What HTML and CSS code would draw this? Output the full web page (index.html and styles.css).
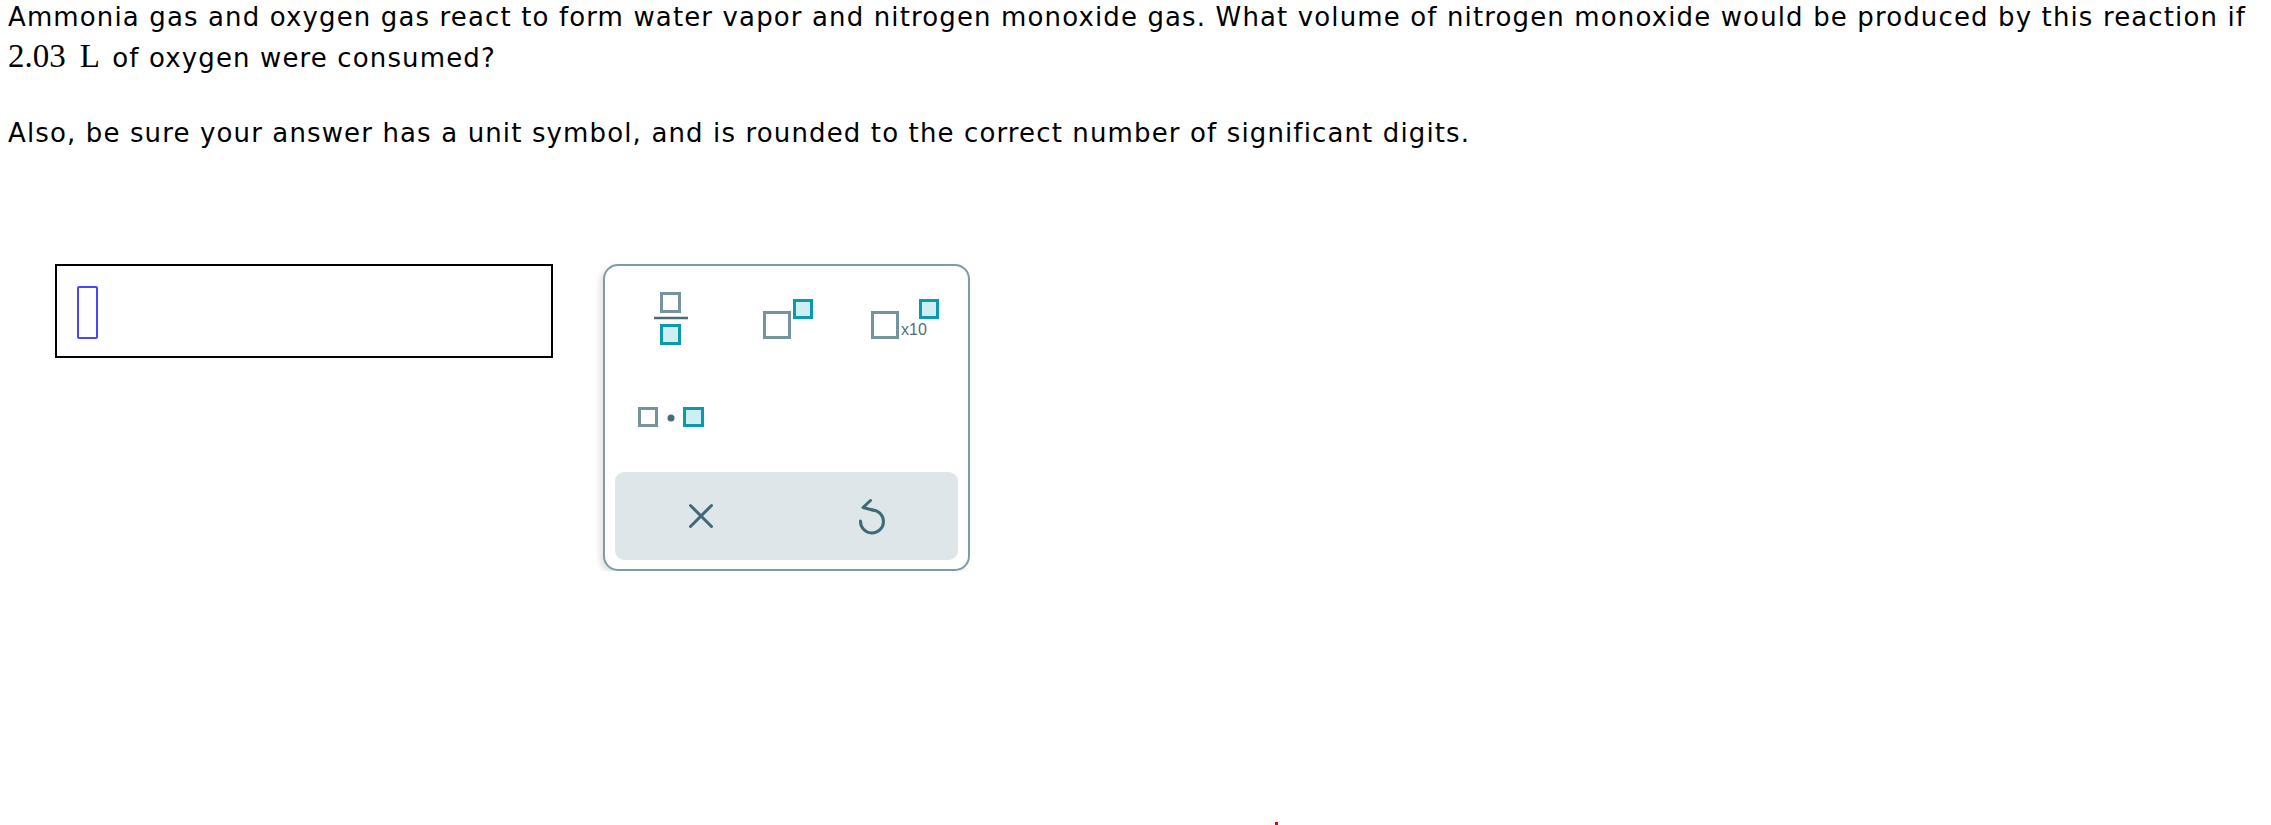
FILE: index.html
```html
<!DOCTYPE html>
<html lang="en">
<head>
<meta charset="utf-8">
<title>Question</title>
<link rel="stylesheet" href="styles.css">
</head>
<body>
<div class="page">
  <p class="question intro">Ammonia gas and oxygen gas react to form water vapor and nitrogen monoxide gas. What volume of nitrogen monoxide would be produced by this reaction if <span class="math"><span class="num">2.03</span><span class="unit">L</span></span> of oxygen were consumed?</p>
  <p class="question note">Also, be sure your answer has a unit symbol, and is rounded to the correct number of significant digits.</p>

  <div class="answer-row">
    <div class="answer-box"><span class="cursor-slot"></span></div>

    <div class="palette">
      <div class="palette-grid">
        <button class="tool" type="button" aria-label="fraction">
          <svg width="36" height="56" viewBox="0 0 36 56">
            <rect class="slot" x="8.5" y="2.5" width="18" height="18"/>
            <line class="bar" x1="1" y1="27" x2="35" y2="27"/>
            <rect class="slot-active" x="8.5" y="34.5" width="18" height="18"/>
          </svg>
        </button>
        <button class="tool" type="button" aria-label="superscript">
          <svg width="52" height="42" viewBox="0 0 52 42">
            <rect class="slot" x="2.5" y="14.5" width="25" height="25"/>
            <rect class="slot-active" x="32.5" y="2.5" width="17" height="17"/>
          </svg>
        </button>
        <button class="tool" type="button" aria-label="scientific notation">
          <svg width="70" height="42" viewBox="0 0 70 42">
            <rect class="slot" x="2.5" y="14.5" width="25" height="25"/>
            <text class="times-ten" x="31" y="37">x10</text>
            <rect class="slot-active" x="50.5" y="2.5" width="17" height="17"/>
          </svg>
        </button>
        <button class="tool" type="button" aria-label="multiplication dot">
          <svg width="68" height="22" viewBox="0 0 68 22">
            <rect class="slot" x="2.5" y="2.5" width="17" height="17"/>
            <circle class="dot" cx="34" cy="12" r="3.5"/>
            <rect class="slot-active" x="47.5" y="2.5" width="18" height="17"/>
          </svg>
        </button>
      </div>
      <div class="palette-actions">
        <button class="action" type="button" aria-label="clear">
          <svg width="26" height="26" viewBox="0 0 26 26">
            <path class="stroke-icon" d="M2.5 2.5 L23.5 23.5 M23.5 2.5 L2.5 23.5"/>
          </svg>
        </button>
        <button class="action" type="button" aria-label="undo">
          <svg width="30" height="38" viewBox="0 0 30 38">
            <path class="stroke-icon" d="M15.5 13 A11.5 11.5 0 1 1 3.5 24"/>
            <path class="stroke-icon" d="M13.5 3.5 L6 10.5 L15.5 13"/>
          </svg>
        </button>
      </div>
    </div>
  </div>
</div>
<span class="marker"></span>
</body>
</html>
```

FILE: styles.css
```css
html, body {
  margin: 0;
  padding: 0;
  background: #ffffff;
}

.page {
  padding: 0 8px;
}

.question {
  margin: 0;
  font-family: "DejaVu Sans", Verdana, sans-serif;
  font-size: 26px;
  letter-spacing: 1.13px;
  line-height: 40.7px;
  color: #000000;
}

.question.intro {
  margin-top: -3px;
}

.question.note {
  margin-top: 35px;
}

.math {
  font-family: "Liberation Serif", "Times New Roman", serif;
  font-size: 33px;
  letter-spacing: 0;
  line-height: 1;
  margin-right: 3px;
}

.math .unit {
  margin-left: 14px;
}

.answer-row {
  display: flex;
  align-items: flex-start;
  margin-top: 110px;
}

.answer-box {
  box-sizing: border-box;
  width: 498px;
  height: 94px;
  margin-left: 47px;
  border: 2px solid #000000;
  padding: 20px 0 0 20px;
}

.cursor-slot {
  display: block;
  box-sizing: border-box;
  width: 21px;
  height: 53px;
  border: 2px solid #4646ff;
  border-radius: 2px;
}

.palette {
  box-sizing: border-box;
  width: 367px;
  height: 307px;
  margin-left: 50px;
  border: 2px solid #7e9ca4;
  border-radius: 15px;
  background: #ffffff;
  box-shadow: -3px 3px 6px rgba(0, 0, 0, 0.12);
  display: flex;
  flex-direction: column;
}

.palette-grid {
  display: grid;
  grid-template-columns: repeat(3, 117px);
  grid-auto-rows: 98px;
  padding: 4px 5px 0 7px;
}

.tool, .action {
  display: flex;
  align-items: center;
  justify-content: center;
  background: none;
  border: 0;
  padding: 0;
  margin: 0;
}

.tool svg, .action svg {
  display: block;
}

.slot {
  fill: #ffffff;
  stroke: #75949c;
  stroke-width: 3;
}

.slot-active {
  fill: #cdeef3;
  stroke: #0a9ab0;
  stroke-width: 3;
}

.bar {
  stroke: #4b6b77;
  stroke-width: 2.5;
}

.dot {
  fill: #4b6b77;
}

.times-ten {
  font-family: "Liberation Sans", Arial, sans-serif;
  font-size: 16px;
  fill: #4e6e79;
}

.palette-actions {
  display: grid;
  grid-template-columns: 1fr 1fr;
  height: 88px;
  margin: 6px 10px 9px 10px;
  background: #dfe6e9;
  border-radius: 9px;
}

.stroke-icon {
  fill: none;
  stroke: #3f6979;
  stroke-width: 3;
  stroke-linecap: round;
  stroke-linejoin: round;
}

.marker {
  position: absolute;
  left: 1275px;
  top: 822px;
  width: 3px;
  height: 3px;
  background: #e8000b;
}
```
